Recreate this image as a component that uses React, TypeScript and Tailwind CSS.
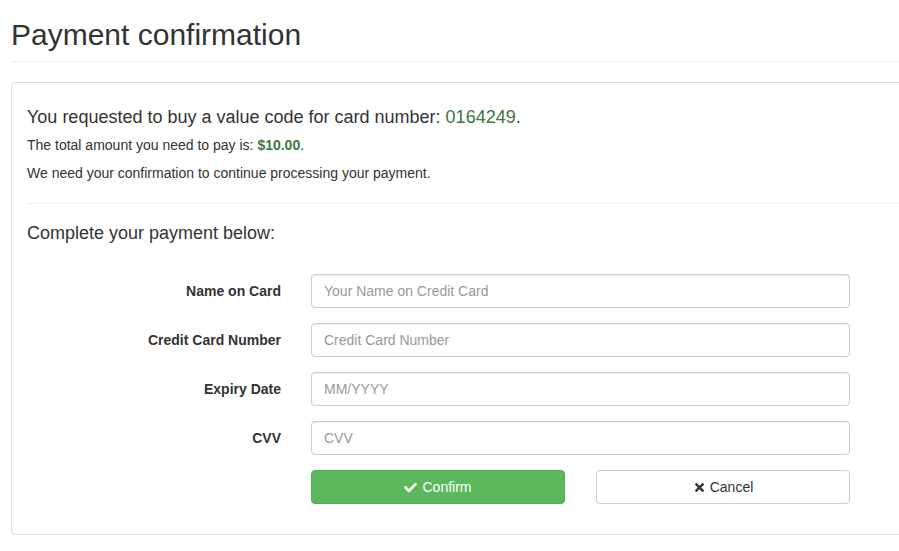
import { FaCheck, FaTimes } from 'react-icons/fa';

const fields = [
  { label: 'Name on Card', placeholder: 'Your Name on Credit Card' },
  { label: 'Credit Card Number', placeholder: 'Credit Card Number' },
  { label: 'Expiry Date', placeholder: 'MM/YYYY' },
  { label: 'CVV', placeholder: 'CVV' },
];

export default function App() {
  return (
    <div
      className="min-h-[551px] w-full overflow-hidden bg-white px-[11px] text-[#333]"
      style={{ fontFamily: '"Liberation Sans", Arial, sans-serif' }}
    >
      {/* Page header */}
      <div className="mt-[18px] w-[1172px] border-b border-[#eee] pb-[10px]">
        <h1 className="text-[30px] leading-[33px] font-normal text-[#333]">Payment confirmation</h1>
      </div>

      {/* Panel */}
      <div className="mt-[20px] w-[1172px] rounded-[4px] border border-[#ddd] bg-white px-[15px] pt-[24px] pb-[30px]">
        <h4 className="text-[18px] leading-[20px]">
          You requested to buy a value code for card number: <span className="text-[#3c763d]">0164249</span>.
        </h4>
        <p className="mt-[8px] text-[14px] leading-[20px]">
          The total amount you need to pay is: <strong className="font-bold text-[#3c763d]">$10.00</strong>.
        </p>
        <p className="mt-[8px] text-[14px] leading-[20px]">We need your confirmation to continue processing your payment.</p>

        <hr className="mt-[20px] border-0 border-t border-[#eee]" />

        <h4 className="mt-[19px] text-[18px] leading-[20px]">Complete your payment below:</h4>

        <form className="mt-[31px] flex flex-col gap-[15px]" onSubmit={(e) => e.preventDefault()}>
          {fields.map((f) => (
            <div key={f.label} className="flex items-center">
              <label className="w-[254px] text-right text-[14px] leading-[20px] font-bold">{f.label}</label>
              <input
                type="text"
                placeholder={f.placeholder}
                className="ml-[30px] h-[34px] w-[539px] rounded-[4px] border border-[#ccc] px-[12px] text-[14px] text-[#555] shadow-[inset_0_1px_1px_rgba(0,0,0,0.075)] outline-none placeholder:text-[#999]"
              />
            </div>
          ))}

          <div className="ml-[284px] flex gap-[31px]">
            <button
              type="submit"
              className="flex h-[34px] w-[254px] items-center justify-center gap-[5px] rounded-[4px] border border-[#4cae4c] bg-[#5cb85c] text-[14px] text-white"
            >
              <FaCheck className="h-[13px] w-[13px]" />
              Confirm
            </button>
            <button
              type="button"
              className="flex h-[34px] w-[254px] items-center justify-center gap-[4px] rounded-[4px] border border-[#ccc] bg-white text-[14px] text-[#333]"
            >
              <FaTimes className="h-[13px] w-[13px]" />
              Cancel
            </button>
          </div>
        </form>
      </div>
    </div>
  );
}
